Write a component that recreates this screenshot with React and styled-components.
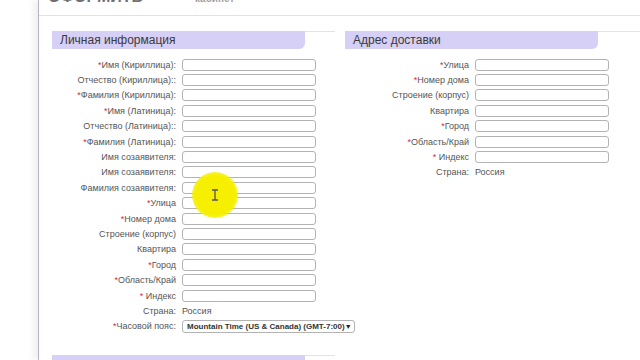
import React from "react";
import styled, { createGlobalStyle } from "styled-components";

const GlobalStyle = createGlobalStyle`
  body {
    margin: 0;
    background: #fff;
    font-family: "Liberation Sans", Arial, sans-serif;
    overflow: hidden;
  }
`;

const Frame = styled.div`
  position: relative;
  margin-left: 38px;
  height: 360px;
  border-left: 1px solid #b9b2c9;
  box-shadow: -5px 0 6px rgba(0, 0, 0, 0.06);
  overflow: hidden;
`;

const TopBar = styled.div`
  height: 15px;
  overflow: hidden;
  display: flex;
  align-items: flex-start;
  gap: 52px;
  padding-left: 9px;
  color: #8a8a8a;
`;

const Title = styled.span`
  font-size: ${(p) => p.size}px;
  font-weight: bold;
  line-height: 1;
  margin-top: -${(p) => Math.round(p.size * 0.85 - 3)}px;
  color: ${(p) => p.tone};
  white-space: nowrap;
`;

const Panel = styled.div`
  border-top: 1px solid #e2e2e2;
  padding: 15px 0 0 13px;
  display: grid;
  grid-template-columns: 283px 1fr;
  column-gap: 10px;
  align-items: start;
`;

const Column = styled.div`
  display: flex;
  flex-direction: column;
`;

const Section = styled.section`
  border-top: 1px solid #e4dff6;
  margin-top: ${(p) => p.offset || 0}px;
`;

const Header = styled.div`
  width: 253px;
  height: 18px;
  margin-top: -1px;
  background: #d6cff6;
  border-bottom-right-radius: 6px;
  padding-left: 8px;
  box-sizing: border-box;
  font-size: 12px;
  line-height: 19px;
  color: #3a3a3a;
`;

const Rows = styled.div`
  padding-top: 8px;
`;

const Row = styled.div`
  display: grid;
  grid-template-columns: 124px auto;
  column-gap: 6px;
  height: 15.4px;
  align-items: center;
`;

const Label = styled.span`
  text-align: right;
  font-size: 9px;
  color: #555;
  white-space: nowrap;
`;

const Star = styled.span`
  color: #d03030;
`;

const Field = styled.div`
  width: 134px;
  height: 12px;
  box-sizing: border-box;
  border: 1px solid #b3b3b3;
  border-radius: 3px;
  background: #fff;
`;

const Value = styled.span`
  font-size: 9px;
  color: #555;
`;

const Select = styled.div`
  width: 173px;
  height: 13px;
  box-sizing: border-box;
  border: 1px solid #b3b3b3;
  border-radius: 3px;
  display: flex;
  align-items: center;
  justify-content: space-between;
  padding: 0 4px 0 4px;
  font-size: 8px;
  color: #333;
  font-weight: bold;
  white-space: nowrap;
  overflow: hidden;
`;

const Arrow = styled.span`
  font-size: 7px;
  color: #222;
`;

const Highlight = styled.div`
  position: absolute;
  left: 153px;
  top: 172px;
  width: 46px;
  height: 46px;
  border-radius: 50%;
  background: radial-gradient(circle, #f6f000 60%, rgba(246, 240, 0, 0.6) 80%, rgba(246, 240, 0, 0) 100%);
  display: flex;
  align-items: center;
  justify-content: center;
`;

const personal = [
  ["Имя (Кириллица):", true],
  ["Отчество (Кириллица)::", false],
  ["Фамилия (Кириллица):", true],
  ["Имя (Латиница):", true],
  ["Отчество (Латиница)::", false],
  ["Фамилия (Латиница):", true],
  ["Имя созаявителя:", false],
  ["Имя созаявителя:", false],
  ["Фамилия созаявителя:", false],
  ["Улица", true],
  ["Номер дома", true],
  ["Строение (корпус)", false],
  ["Квартира", false],
  ["Город", true],
  ["Область/Край", true],
  [" Индекс", true],
];

const delivery = [
  ["Улица", true],
  ["Номер дома", true],
  ["Строение (корпус)", false],
  ["Квартира", false],
  ["Город", true],
  ["Область/Край", true],
  [" Индекс", true],
];

function FieldRow({ label, required }) {
  return (
    <Row>
      <Label>
        {required && <Star>*</Star>}
        {label}
      </Label>
      <Field />
    </Row>
  );
}

function Country() {
  return (
    <Row>
      <Label>Страна:</Label>
      <Value>Россия</Value>
    </Row>
  );
}

export default function App() {
  return (
    <>
      <GlobalStyle />
      <Frame>
        <TopBar>
          <Title size={16} tone="#6f6f6f">ОФОРМИТЬ</Title>
          <Title size={10} tone="#a0a0a0">кабинет</Title>
        </TopBar>
        <Panel>
          <Column>
            <Section>
              <Header>Личная информация</Header>
              <Rows>
                {personal.map(([label, req], i) => (
                  <FieldRow key={i} label={label} required={req} />
                ))}
                <Country />
                <Row>
                  <Label>
                    <Star>*</Star>Часовой пояс:
                  </Label>
                  <Select>
                    Mountain Time (US &amp; Canada) (GMT-7:00)
                    <Arrow>▼</Arrow>
                  </Select>
                </Row>
              </Rows>
            </Section>
            <Section offset={21}>
              <Header />
            </Section>
          </Column>
          <Column>
            <Section>
              <Header>Адрес доставки</Header>
              <Rows>
                {delivery.map(([label, req], i) => (
                  <FieldRow key={i} label={label} required={req} />
                ))}
                <Country />
              </Rows>
            </Section>
          </Column>
        </Panel>
        <Highlight>
          <svg width="8" height="12" viewBox="0 0 8 12">
            <path d="M1 1h6M4 1v10M1 11h6" stroke="#555" strokeWidth="1.3" fill="none" />
          </svg>
        </Highlight>
      </Frame>
    </>
  );
}
